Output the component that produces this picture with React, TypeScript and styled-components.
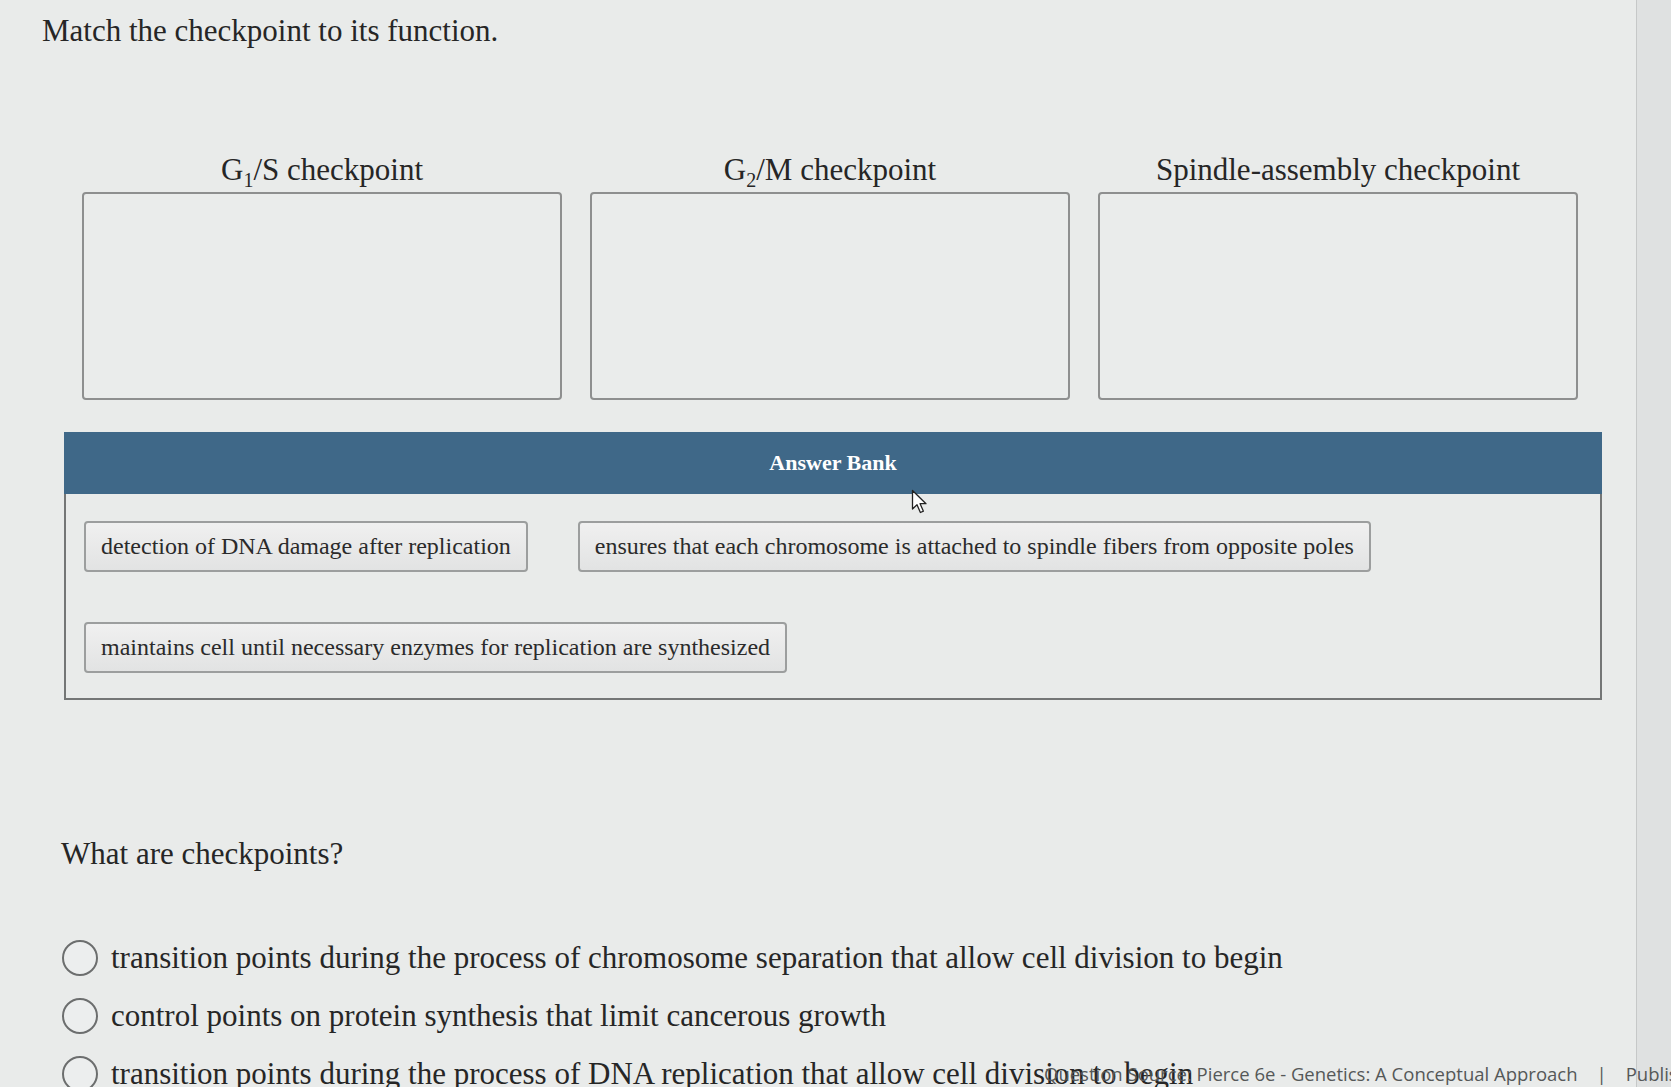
import React from "react";
import styled, { createGlobalStyle } from "styled-components";

const Global = createGlobalStyle`
  html, body {
    margin: 0;
    padding: 0;
    height: 100%;
    overflow: hidden;
    background: #e6e8e8;
  }
  body {
    font-family: "Liberation Serif", "Times New Roman", serif;
    color: #262626;
  }
`;

const Screen = styled.div`
  position: relative;
  display: flex;
  width: 1671px;
  height: 1087px;
  overflow: hidden;
`;

const Main = styled.main`
  width: 1636px;
  flex-shrink: 0;
  display: flex;
  flex-direction: column;
  background: #e9ebea;
`;

const ScrollTrack = styled.div`
  flex: 1;
  background: #dfe1e1;
  border-left: 1px solid #c6c8c8;
`;

const Title = styled.h1`
  margin: 13px 0 0 42px;
  font-size: 31px;
  line-height: 36px;
  font-weight: normal;
`;

const Targets = styled.div`
  display: grid;
  grid-template-columns: repeat(3, 480px);
  column-gap: 28px;
  margin: 103px 0 0 82px;
`;

const Target = styled.div`
  display: flex;
  flex-direction: column;
  align-items: center;
  gap: 4px;
`;

const Label = styled.div`
  font-size: 31px;
  line-height: 36px;
  sub {
    font-size: 20px;
    line-height: 0;
  }
`;

const DropBox = styled.div`
  width: 100%;
  height: 208px;
  box-sizing: border-box;
  border: 2px solid #8e8f8f;
  border-radius: 4px;
  background: #eaeceb;
`;

const Bank = styled.section`
  margin: 32px 0 0 64px;
  width: 1538px;
  box-sizing: border-box;
  border: 2px solid #747676;
  border-top: none;
`;

const BankHeader = styled.div`
  height: 62px;
  display: flex;
  align-items: center;
  justify-content: center;
  background: #3f6888;
  color: #ffffff;
  font-size: 22px;
  font-weight: bold;
  margin: 0 -2px;
`;

const BankBody = styled.div`
  display: flex;
  flex-wrap: wrap;
  column-gap: 50px;
  row-gap: 50px;
  padding: 27px 20px 25px 18px;
`;

const Chip = styled.div`
  height: 51px;
  box-sizing: border-box;
  display: flex;
  align-items: center;
  padding: 0 15px;
  font-size: 24px;
  color: #2b2b2b;
  border: 2px solid #9c9e9e;
  border-radius: 4px;
  background: linear-gradient(#f0f0f0, #e2e3e3);
  white-space: nowrap;
`;

const Question = styled.h2`
  margin: 136px 0 0 61px;
  font-size: 31px;
  line-height: 36px;
  font-weight: normal;
`;

const Options = styled.div`
  display: flex;
  flex-direction: column;
  margin: 68px 0 0 62px;
  gap: 22px;
`;

const Option = styled.label`
  display: flex;
  align-items: center;
  gap: 13px;
  height: 36px;
  font-size: 31px;
  white-space: nowrap;
`;

const Radio = styled.span`
  width: 36px;
  height: 36px;
  box-sizing: border-box;
  border: 2px solid #6c6e6e;
  border-radius: 50%;
  background: #eceeee;
  flex-shrink: 0;
`;

const Footer = styled.div`
  position: absolute;
  left: 1044px;
  top: 1061px;
  display: flex;
  gap: 19px;
  font-family: "Open Sans", "Liberation Sans", sans-serif;
  font-size: 18.5px;
  color: #555858;
  white-space: nowrap;
`;

const Cursor = styled.svg`
  position: absolute;
  left: 911px;
  top: 489px;
`;

const options = [
  "transition points during the process of chromosome separation that allow cell division to begin",
  "control points on protein synthesis that limit cancerous growth",
  "transition points during the process of DNA replication that allow cell division to begin",
];

const answers = [
  "detection of DNA damage after replication",
  "ensures that each chromosome is attached to spindle fibers from opposite poles",
  "maintains cell until necessary enzymes for replication are synthesized",
];

export default function App() {
  return (
    <Screen>
      <Global />
      <Main>
        <Title>Match the checkpoint to its function.</Title>
        <Targets>
          <Target>
            <Label>
              G<sub>1</sub>/S checkpoint
            </Label>
            <DropBox />
          </Target>
          <Target>
            <Label>
              G<sub>2</sub>/M checkpoint
            </Label>
            <DropBox />
          </Target>
          <Target>
            <Label>Spindle-assembly checkpoint</Label>
            <DropBox />
          </Target>
        </Targets>
        <Bank>
          <BankHeader>Answer Bank</BankHeader>
          <BankBody>
            {answers.map((a) => (
              <Chip key={a}>{a}</Chip>
            ))}
          </BankBody>
        </Bank>
        <Question>What are checkpoints?</Question>
        <Options>
          {options.map((o) => (
            <Option key={o}>
              <Radio />
              {o}
            </Option>
          ))}
        </Options>
      </Main>
      <ScrollTrack />
      <Footer>
        <span>Question Source: Pierce 6e - Genetics: A Conceptual Approach</span>
        <span>|</span>
        <span>Publisher: W. H. Freeman</span>
      </Footer>
      <Cursor width="18" height="26" viewBox="0 0 18 26">
        <path
          d="M1.5 1.5 L1.5 20 L6 15.8 L9.4 23.5 L12.4 22.2 L9.1 14.7 L15 14.7 Z"
          fill="#ffffff"
          stroke="#222"
          strokeWidth="1.3"
          strokeLinejoin="round"
        />
      </Cursor>
    </Screen>
  );
}
